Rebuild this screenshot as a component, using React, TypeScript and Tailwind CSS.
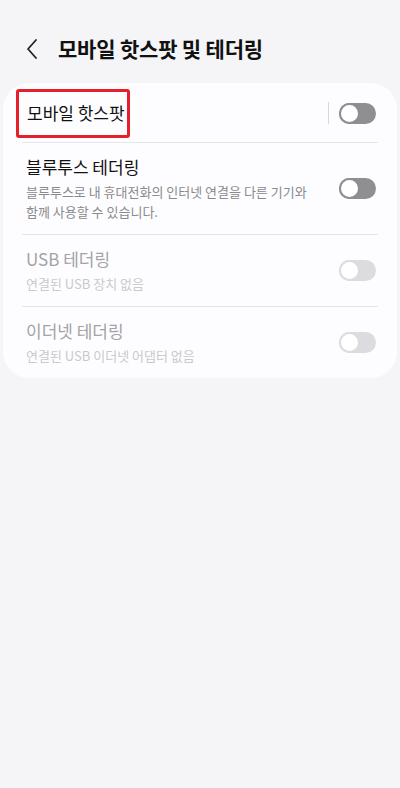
import React from "react";

function Toggle({ disabled = false }: { disabled?: boolean }) {
  return (
    <div
      className={`flex h-[21px] w-[37px] items-center rounded-full ${disabled ? "bg-[#dcdce0]" : "bg-[#8e8e93]"}`}
    >
      <div
        className={`h-[21px] w-[21px] rounded-full border-[2px] bg-white ${disabled ? "border-[#dcdce0]" : "border-[#8e8e93]"}`}
      />
    </div>
  );
}

function Row({
  title,
  subtitle,
  disabled = false,
}: {
  title: string;
  subtitle: string;
  disabled?: boolean;
}) {
  return (
    <div className="flex items-center justify-between py-[12px] pl-[23px] pr-[21px]">
      <div className="flex flex-col">
        <div className={`text-[17px] leading-[24px] ${disabled ? "text-[#a3a3a6]" : "text-[#111]"}`}>{title}</div>
        <div className={`mt-[3px] w-[292px] text-[13px] leading-[20px] ${disabled ? "text-[#c9c9cc]" : "text-[#8a8a8d]"}`}>
          {subtitle}
        </div>
      </div>
      <Toggle disabled={disabled} />
    </div>
  );
}

export default function App() {
  return (
    <div
      className="min-h-[788px] bg-[#f5f5f7]"
      style={{ fontFamily: '"Noto Sans CJK KR", "Noto Sans", sans-serif' }}
    >
      <header className="flex h-[83px] items-center pl-[24px] pt-[14px]">
        <svg width="16" height="24" viewBox="0 0 16 24" fill="none" className="mr-[18px]">
          <path d="M12 3 L4 12 L12 21" stroke="#222" strokeWidth="1.8" strokeLinecap="round" strokeLinejoin="round" />
        </svg>
        <h1 className="text-[21px] font-bold tracking-[-0.2px] text-[#111]">모바일 핫스팟 및 테더링</h1>
      </header>

      <div className="mx-[3px] rounded-[26px] bg-[#fdfdff]">
        <div className="flex h-[59px] items-center justify-between pl-[13px] pr-[21px] pt-[1px]">
          <div className="flex h-[49px] w-[114px] items-center rounded-[3px] border-[3px] border-[#e6202b] pl-[8px]">
            <span className="text-[17px] text-[#111]">모바일 핫스팟</span>
          </div>
          <div className="flex items-center">
            <div className="mr-[10px] h-[22px] w-px bg-[#d8d8dc]" />
            <Toggle />
          </div>
        </div>
        <div className="mx-[19px] h-px bg-[#e6e6ea]" />
        <Row title="블루투스 테더링" subtitle="블루투스로 내 휴대전화의 인터넷 연결을 다른 기기와 함께 사용할 수 있습니다." />
        <div className="mx-[19px] h-px bg-[#e6e6ea]" />
        <Row title="USB 테더링" subtitle="연결된 USB 장치 없음" disabled />
        <div className="mx-[19px] h-px bg-[#e6e6ea]" />
        <Row title="이더넷 테더링" subtitle="연결된 USB 이더넷 어댑터 없음" disabled />
      </div>
    </div>
  );
}
